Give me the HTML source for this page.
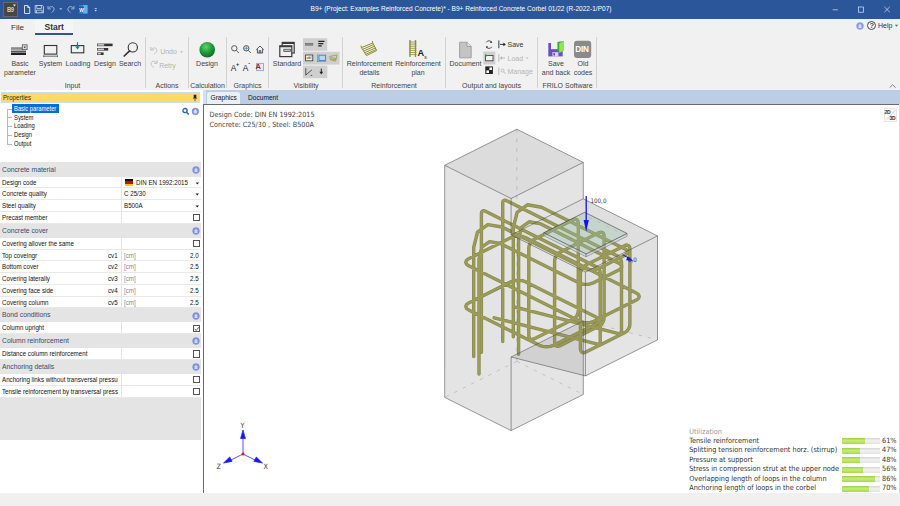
<!DOCTYPE html>
<html><head><meta charset="utf-8"><title>B9+</title>
<style>
*{box-sizing:border-box;margin:0;padding:0}
html,body{width:900px;height:506px;overflow:hidden;background:#f0f0f0;font-family:"Liberation Sans",sans-serif;font-size:7px;color:#222}
.abs{position:absolute}
#title{position:absolute;left:0;top:0;width:900px;height:19px;background:#2b579a;color:#fff}
#title .cap{position:absolute;left:0;width:900px;top:5px;text-align:center;font-size:6.55px;letter-spacing:0px;padding-left:22px}
#menurow{position:absolute;left:0;top:19px;width:900px;height:16px;background:#f1f1f1}
#ribbon{position:absolute;left:0;top:35px;width:900px;height:55px;background:#f1f1f1}
.rl{position:absolute;font-size:7px;color:#444;text-align:center;line-height:9px;white-space:nowrap;transform:translateX(-50%)}
.gl{position:absolute;top:46.8px;font-size:7px;color:#444;white-space:nowrap;transform:translateX(-50%)}
.sep{position:absolute;top:2px;width:1px;height:51px;background:#d2d2d2}
.dis{color:#b4b4b4}
#bluebar{position:absolute;left:0;top:90px;width:900px;height:14px;background:#bccde6}
#left{position:absolute;left:0;top:90px;width:203px;height:403px;background:#fff}
#prophead{position:absolute;left:0.8px;top:1.8px;width:199.2px;height:11px;background:#ffd966;border:1px solid #c9ddf3;font-size:7px;line-height:9px;padding-left:1.6px;color:#3a2a00}#prophead span{display:inline-block;transform:scaleX(.88);transform-origin:0 0}
#tree{position:absolute;left:0;top:13px;width:203px;height:59px;background:#fff;font-size:7px;color:#111}
#tree div.it{position:absolute;left:13.6px;height:9px;line-height:9px;white-space:nowrap;transform:scaleX(.83);transform-origin:0 0}
#grid{position:absolute;left:0;top:72px;width:201px;height:278px;background:#e4e4e4;font-size:7px;color:#111}
.hd{position:absolute;left:0;width:201px;background:#e4e4e4;color:#3b4a6b;padding-left:2px;white-space:nowrap;font-size:6.8px}
.row{position:absolute;left:0;width:201px;background:#fff;border-bottom:1px solid #e8e8e8;white-space:nowrap}
.row .n{position:absolute;left:2px;top:0;transform:scaleX(.885);transform-origin:0 0}.sx{transform:scaleX(.885);transform-origin:0 0}.sxr{transform:scaleX(.885);transform-origin:100% 0}
.row .v{position:absolute;left:121px;top:0;bottom:0;border-left:1px solid #e4e4e4;width:80px}
.cb{position:absolute;left:192px;width:7px;height:7px;border:1px solid #444;background:#fff}
.circ{position:absolute;left:192px;width:7px;height:7px;border-radius:50%;background:#8ea0e0;border:1px solid #6f7fd0}
#split{position:absolute;left:203px;top:90px;width:2px;height:403px;background:#6a6a6a}
#gfx{position:absolute;left:206px;top:104px;width:689px;height:389px;background:#fff}
#status{position:absolute;left:0;top:493px;width:900px;height:13px;background:#f0f0f0}
.gt{font-family:"DejaVu Sans Condensed","DejaVu Sans","Liberation Sans",sans-serif}
</style></head><body>
<div id="title">
<div class="abs" style="left:3px;top:2px;width:15px;height:15px;background:#484644;border:1px solid #6b6967"></div>
<div class="abs" style="left:6.6px;top:5.6px;font-size:7px;font-weight:bold;color:#cfcfcf;letter-spacing:-.5px;transform:scaleX(.85);transform-origin:0 0">B9</div>
<svg class="abs" style="left:0;top:0" width="120" height="19" viewBox="0 0 120 19">
<path d="M13 4.5h3l-1.5 2z" fill="#eee"/>
<path d="M24.5 5.5h3.2l2 2v6h-5.2z M27.7 5.5v2h2" fill="none" stroke="#fff" stroke-width=".8"/>
<path d="M35.2 5.5h7.2l1 1v6.3h-8.2z" fill="none" stroke="#dfe6f2" stroke-width=".8"/><path d="M36.8 5.5v3h4.6v-3M36.5 12.8v-2.6h5.6v2.6" fill="none" stroke="#dfe6f2" stroke-width=".7"/>
<path d="M48.5 8.2c2-2.6 5.5-1.8 5.6.8c0 1.6-1.2 2.6-2.6 3.8" fill="none" stroke="#a9bbdc" stroke-width=".9"/><path d="M48 6v2.9h2.9" fill="none" stroke="#a9bbdc" stroke-width=".9"/>
<path d="M59.3 8.3h3l-1.5 1.7z" fill="#b9c7e2"/>
<path d="M73.5 8.2c-2-2.6-5.5-1.8-5.6.8c0 1.6 1.2 2.6 2.6 3.8" fill="none" stroke="#a9bbdc" stroke-width=".9"/><path d="M74 6v2.9h-2.9" fill="none" stroke="#a9bbdc" stroke-width=".9"/>
<rect x="79" y="5" width="8.5" height="8.5" fill="#2f7fd6"/><rect x="83" y="5" width="4.5" height="8.5" fill="#5fb0f0"/><rect x="78.5" y="6.5" width="5.5" height="5.5" fill="#1a56b0"/>
<rect x="94.6" y="8.3" width="2.2" height=".8" fill="#dfe6f2"/><path d="M94.6 10h2.2l-1.1 1.4z" fill="#dfe6f2"/>
</svg>
<div class="abs" style="left:79.3px;top:6.6px;font-size:5px;font-weight:bold;color:#fff">W</div>
<div class="cap">B9+ (Project: Examples Reinforced Concrete)* - B9+ Reinforced Concrete Corbel 01/22 (R-2022-1/P07)</div>
<svg class="abs" style="left:820px;top:0" width="80" height="19" viewBox="0 0 80 19">
<path d="M12.6 9.8h5.4" stroke="#d6dff0" stroke-width=".7"/>
<rect x="38.4" y="7" width="5.2" height="5.2" fill="none" stroke="#dfe6f4" stroke-width=".7"/>
<path d="M64.4 6.8l5.4 5.4M69.8 6.8l-5.4 5.4" stroke="#dfe6f4" stroke-width=".7"/>
</svg>
</div>
<div id="menurow">
<div class="abs" style="left:11px;top:3.6px;font-size:8px;color:#333">File</div>
<div class="abs" style="left:35px;top:0;width:38px;height:16px;background:#f5f5f5"></div>
<div class="abs" style="left:44.5px;top:2.5px;font-size:8.5px;font-weight:bold;color:#333">Start</div>
<div class="abs" style="left:35px;top:14.3px;width:38px;height:1.6px;background:#2b579a"></div>
<svg class="abs" style="left:855.8px;top:2.6px" width="8" height="8" viewBox="0 0 8 8"><circle cx="4" cy="4" r="3.5" fill="#8e9ae2" stroke="#8a96de" stroke-width=".4"/><path d="M4 1.7l2 2.6h-1.1l.9 1.6h-3.6l.9-1.6h-1.1z" fill="#cfe4fb"/></svg>
<div class="abs" style="left:867.2px;top:2.3px;width:9px;height:9px;border-radius:50%;border:.7px solid #444;background:#fff;font-size:7.4px;font-weight:bold;line-height:7.8px;text-align:center;color:#444">?</div>
<div class="abs" style="left:878px;top:3px;font-size:7px;color:#333">Help</div>
<svg class="abs" style="left:894px;top:4.6px" width="6" height="4"><path d="M.8 .8h3.4l-1.7 1.9z" fill="#666"/></svg>
</div>
<div id="ribbon">
<div class="rl " style="left:20px;top:24.4px">Basic<br>parameter</div>
<div class="rl " style="left:50.5px;top:24.4px">System</div>
<div class="rl " style="left:78px;top:24.4px">Loading</div>
<div class="rl " style="left:105px;top:24.4px">Design</div>
<div class="rl " style="left:130px;top:24.4px">Search</div>
<div class="gl" style="left:72.5px">Input</div>
<div class="sep" style="left:145px"></div>
<div class="rl dis" style="left:168.5px;top:12.2px">Undo</div>
<div class="rl dis" style="left:167.5px;top:25.6px">Retry</div>
<div class="gl" style="left:167px">Actions</div>
<div class="sep" style="left:188px"></div>
<div class="rl " style="left:207px;top:24.4px">Design</div>
<div class="gl" style="left:207.5px">Calculation</div>
<div class="sep" style="left:226px"></div>
<div class="gl" style="left:247.5px">Graphics</div>
<div class="sep" style="left:268px"></div>
<div class="rl " style="left:287px;top:24.4px">Standard</div>
<div class="gl" style="left:306px">Visibility</div>
<div class="sep" style="left:342px"></div>
<div class="rl " style="left:369.5px;top:24.4px">Reinforcement<br>details</div>
<div class="rl " style="left:418px;top:24.4px">Reinforcement<br>plan</div>
<div class="gl" style="left:394px">Reinforcement</div>
<div class="sep" style="left:445px"></div>
<div class="rl " style="left:465.5px;top:24.4px">Document</div>
<div class="gl" style="left:491.5px">Output and layouts</div>
<div class="abs" style="left:507.5px;top:6px;font-size:7px;color:#333">Save</div>
<div class="abs dis" style="left:507.5px;top:19.6px;font-size:7px">Load</div>
<div class="abs dis" style="left:507.5px;top:33px;font-size:7px">Manage</div>
<div class="sep" style="left:537px"></div>
<div class="rl " style="left:556px;top:24.4px">Save<br>and back</div>
<div class="rl " style="left:583px;top:24.4px">Old<br>codes</div>
<div class="gl" style="left:567.5px">FRILO Software</div>
<div class="sep" style="left:596px"></div>
<svg class="abs" style="left:0;top:0" width="900" height="55" viewBox="0 0 900 55">
<!-- Basic parameter -->
<rect x="11" y="12.2" width="11.5" height="2.6" fill="#8a8a8a"/><rect x="11" y="15.6" width="15" height="1.6" fill="#555"/><rect x="11" y="17.6" width="15" height="2.4" fill="#222"/>
<rect x="22.3" y="9.8" width="4.8" height="4.8" fill="#ddd" stroke="#555" stroke-width=".8"/><rect x="23.9" y="11.4" width="1.6" height="1.6" fill="#555"/>
<!-- System -->
<rect x="44.3" y="10.5" width="12.5" height="8.6" fill="none" stroke="#333" stroke-width="1.1"/><path d="M43.5 21.2h14.2" stroke="#333" stroke-width=".7"/><path d="M43.7 20.2v2M57.5 20.2v2" stroke="#333" stroke-width=".6"/>
<!-- Loading -->
<rect x="71.3" y="10.6" width="12.5" height="7.2" fill="none" stroke="#333" stroke-width="1.1"/><path d="M77.5 7.2v5" stroke="#0a8a8a" stroke-width="1.2"/><path d="M75.2 11.6h4.6l-2.3 2.8z" fill="#0a8a8a"/>
<!-- Design bars -->
<rect x="97" y="8.6" width="15.6" height="2.6" fill="#333"/><rect x="97.6" y="9.1" width="6.6" height="1.6" fill="#ccc"/>
<rect x="97" y="13" width="11.2" height="2.6" fill="#333"/><rect x="97.6" y="13.5" width="6.4" height="1.6" fill="#ccc"/>
<rect x="97" y="17.4" width="6.6" height="2.6" fill="#333"/><rect x="97.6" y="17.9" width="3.2" height="1.6" fill="#ccc"/>
<!-- Search -->
<circle cx="132.8" cy="12.4" r="4.6" fill="none" stroke="#333" stroke-width="1.1"/><path d="M129.6 15.8l-5.4 5.2" stroke="#333" stroke-width="1.7" stroke-linecap="round"/>
<!-- Undo / Retry -->
<path d="M151.5 14.5c2-2.6 5.3-1.6 5.3.8c0 1.7-1.4 2.7-2.8 4" fill="none" stroke="#b9b9b9" stroke-width=".9"/><path d="M150.8 12v3h3" fill="none" stroke="#b9b9b9" stroke-width=".9"/>
<path d="M180 16.2h3l-1.5 1.7z" fill="#b9b9b9"/>
<path d="M156.3 27.8c-2-2.6-5.3-1.6-5.3.8c0 1.7 1.4 2.7 2.8 4" fill="none" stroke="#b9b9b9" stroke-width=".9"/><path d="M157 25.3v3h-3" fill="none" stroke="#b9b9b9" stroke-width=".9"/>
<!-- Design green ball -->
<defs><radialGradient id="gb" cx=".42" cy=".32" r=".7"><stop offset="0" stop-color="#5fd36a"/><stop offset=".55" stop-color="#1f9a3c"/><stop offset="1" stop-color="#0f6a28"/></radialGradient></defs>
<circle cx="207.2" cy="14.7" r="7.8" fill="url(#gb)"/>
<!-- Graphics icons -->
<g fill="none" stroke="#333" stroke-width=".8">
<circle cx="234.3" cy="13.3" r="2.7"/><path d="M236.3 15.4l2.6 2.6"/>
<circle cx="246.3" cy="13.3" r="2.7" stroke="#333"/><path d="M248.3 15.4l2.6 2.6"/>
<path d="M256.3 14.6l3.7-3.6l3.7 3.6M257.4 14v4h5.2v-4M259.2 18v-2.4h1.6v2.4"/>
</g>
<path d="M246.3 11v4.6M244 13.3h4.6" stroke="#2a7fd0" stroke-width=".7"/>
<rect x="256.7" y="28.3" width="6.8" height="7.4" fill="#e8eef8" stroke="#6a8fc8" stroke-width=".7"/>
<!-- Standard -->
<g fill="#f1f1f1" stroke="#3a3a3a" stroke-width="1.2"><rect x="282.2" y="7.4" width="12" height="10.6"/><rect x="279.8" y="10.8" width="12" height="10.8"/></g><path d="M282.2 8.2h12M279.8 11.6h12" stroke="#3a3a3a" stroke-width="1.4"/><rect x="283.8" y="14.2" width="6.6" height="2.4" fill="#bbb" stroke="#444" stroke-width=".7"/>
<!-- Visibility toggles -->
<rect x="303" y="3.2" width="24.3" height="12.6" fill="#cfcfcf"/><rect x="303" y="16.8" width="36.6" height="12.8" fill="#cfcfcf"/><rect x="303" y="30.6" width="24.3" height="12.6" fill="#cfcfcf"/>
<rect x="305.3" y="8.2" width="7.6" height="2" fill="#888" stroke="#555" stroke-width=".4"/>
<path d="M318.3 6.4h6.2M318.3 8.6h5M318.3 10.8h3.4" stroke="#222" stroke-width="1.3"/>
<rect x="305.6" y="20" width="7.2" height="5.8" fill="#f4f4f4" stroke="#333" stroke-width=".8"/><text x="306.6" y="24.4" font-family="Liberation Sans,sans-serif" font-size="3.6" fill="#222">abl</text>
<rect x="319" y="20.2" width="6.6" height="5.2" fill="#bcd6f2" stroke="#3a7fd0" stroke-width=".9"/><path d="M317.6 19v8M317 26.4h9" stroke="#3a7fd0" stroke-width=".6"/>
<path d="M329.6 21.5l7.4-1.6l-1.4 6.2l-5-1.2z M331 22.5l5.2 1.2M330.6 24l5 .8" fill="none" stroke="#9a9a40" stroke-width=".8"/>
<path d="M305.8 33.2v7M305.8 40l6-5M310.6 40.4l1.6 0" stroke="#333" stroke-width=".8" fill="none"/>
<path d="M321.3 33.6v4" stroke="#222" stroke-width="1"/><path d="M319.4 36.8h3.8l-1.9 2.8z" fill="#222"/>
<!-- Reinforcement details -->
<g fill="none" stroke="#8e8e2c" stroke-width="1"><path d="M361.4 12.6l11.4-4.6l3.8 7.6l-10.2 5z"/><path d="M362.6 14.4l10.8-4.8M363.8 16l10.8-4.8M365 17.6l10.6-4.8M366 19.2l10.4-4.8M372.8 8l-.6-2M361.4 12.6l-.4-2"/></g>
<!-- Reinforcement plan -->
<g fill="none" stroke="#8e8e2c"><path d="M410 5v17M415.5 5v17" stroke-width="1.3"/><path d="M409 7h7.5M409 9.1h7.5M409 11.2h7.5M409 13.3h7.5M409 15.4h7.5M409 17.5h7.5M409 19.6h7.5" stroke-width=".8"/></g>
<!-- Document -->
<path d="M459.6 7.2h7.4l4.2 4.2v11.4h-11.6z" fill="#c4c4c4" stroke="#8a8a8a" stroke-width=".7"/><path d="M467 7.2v4.2h4.2" fill="#e8e8e8" stroke="#8a8a8a" stroke-width=".7"/>
<!-- small output icons -->
<path d="M486.2 7.4a3.2 3.2 0 0 1 5.6 0M491.8 11.8a3.2 3.2 0 0 1 -5.6 0" fill="none" stroke="#333" stroke-width=".8"/><path d="M491 5.8l1.2 2l-2.2.2zM487 13.4l-1.2-2l2.2-.2z" fill="#333"/>
<rect x="483.3" y="16.6" width="12" height="12.8" fill="#cfcfcf"/>
<rect x="485.6" y="20.4" width="7.4" height="5.4" fill="#f4f4f4" stroke="#333" stroke-width=".8"/><path d="M485.2 19l2.8 1.6l-2.8 1.6z" fill="#1a9a3a"/>
<rect x="485.3" y="31.4" width="7.6" height="7.6" fill="#222"/><rect x="486.4" y="35.4" width="2.6" height="2.6" fill="#fff"/><rect x="489.4" y="32.4" width="2.6" height="2.6" fill="#fff"/>
<path d="M498.8 5.6v7.6" stroke="#333" stroke-width=".9"/><path d="M498.8 5.6v7.6" stroke="#3a7fd0" stroke-width=".9" stroke-dasharray="1.2 1.6"/><path d="M500 9.4h4" stroke="#222" stroke-width=".9"/><path d="M503.4 7.6l2.4 1.8l-2.4 1.8z" fill="#222"/>
<path d="M498.8 19.2v7.6" stroke="#b4b4b4" stroke-width=".9"/><path d="M501 23h4" stroke="#b4b4b4" stroke-width=".9"/><path d="M502 21.2l-2.4 1.8l2.4 1.8z" fill="#b4b4b4"/>
<path d="M498.8 32.6v7.6" stroke="#b4b4b4" stroke-width=".9"/><circle cx="502.6" cy="35.6" r="1.5" fill="none" stroke="#b4b4b4" stroke-width=".8"/><path d="M503.6 36.8l2 2" stroke="#b4b4b4" stroke-width=".9"/>
<path d="M525.6 22.4h3l-1.5 1.7z" fill="#b9b9b9"/>
<!-- Save and back -->
<path d="M548.3 8h14.4v13.4h-14.4z" fill="#6a4fc0"/><rect x="551" y="8" width="8" height="6.2" fill="#f0f0f0"/><rect x="552.4" y="17.2" width="6" height="4.2" fill="#d8d8e8"/><rect x="553.4" y="18" width="1.6" height="2.6" fill="#6a4fc0"/>
<path d="M557.4 7l6.6-1v9.4l-6.6 1.4z" fill="#2fae3a"/><path d="M559.2 8.2l4.8-2.2v9.4l-4.8 2.6z" fill="#9be04a"/>
<!-- DIN -->
<rect x="574" y="5.8" width="17.2" height="17.2" rx="3" fill="#8a8a8a"/>
<!-- collapse chevron -->
<path d="M889.6 52.6l3-2.8l3 2.8" fill="none" stroke="#666" stroke-width=".8"/>
</svg>

<div class="abs" style="left:575.3px;top:9.6px;font-size:8.2px;font-weight:bold;color:#fff;letter-spacing:-.2px">DIN</div>
<div class="abs" style="left:417.5px;top:13px;font-size:9.2px;font-weight:bold;color:#222">A</div><div class="abs" style="left:424.2px;top:18.5px;font-size:5px;color:#222">s</div>
<div class="abs" style="left:230.8px;top:27.8px;font-size:8.4px;color:#222">A</div><div class="abs" style="left:236px;top:25.6px;font-size:5.5px;color:#222;font-weight:bold">+</div><div class="abs" style="left:242.8px;top:27.8px;font-size:8.4px;color:#222">A</div><div class="abs" style="left:248.2px;top:25px;font-size:5.5px;color:#222;font-weight:bold">-</div><div class="abs" style="left:255.6px;top:27.4px;font-size:7.5px;font-weight:bold;color:#c01818">A</div>
</div>
<div id="bluebar">
<div class="abs" style="left:203px;top:0;width:3px;height:14px;background:#d3e0f1"></div>
<div class="abs" style="left:206.5px;top:1.5px;width:33px;height:12.5px;background:#e9f0fa;border-radius:2px 2px 0 0"></div>
<div class="abs" style="left:210.5px;top:4px;font-size:6.6px;color:#111">Graphics</div>
<div class="abs" style="left:248px;top:4px;font-size:6.6px;color:#111">Document</div>
</div>
<div id="left">
<div id="prophead"><span>Properties</span></div>
<svg class="abs" style="left:191px;top:3.6px" width="8" height="9" viewBox="0 0 8 9"><path d="M2.7 .8h2.6v2.8l1 .9h-4.6l1-.9z" fill="#222"/><path d="M4 4.5v2.7" stroke="#222" stroke-width=".7"/></svg>
<div id="tree">
<div class="abs" style="left:12px;top:0.9px;width:47.3px;height:9px;background:#0a6cd6"></div>
<div class="it" style="top:0.6px;color:#fff">Basic parameter</div>
<div class="abs" style="left:7px;top:5.5px;width:5px;height:.6px;background:#b8b8b8"></div>
<div class="it" style="top:9.5px;color:#111">System</div>
<div class="abs" style="left:7px;top:14.4px;width:5px;height:.6px;background:#b8b8b8"></div>
<div class="it" style="top:18.4px;color:#111">Loading</div>
<div class="abs" style="left:7px;top:23.3px;width:5px;height:.6px;background:#b8b8b8"></div>
<div class="it" style="top:27.3px;color:#111">Design</div>
<div class="abs" style="left:7px;top:32.2px;width:5px;height:.6px;background:#b8b8b8"></div>
<div class="it" style="top:36.2px;color:#111">Output</div>
<div class="abs" style="left:7px;top:41.1px;width:5px;height:.6px;background:#b8b8b8"></div>
<div class="abs" style="left:7px;top:5.5px;width:.6px;height:36px;background:#b8b8b8"></div>
<svg class="abs" style="left:181px;top:3.5px" width="20" height="10" viewBox="0 0 20 10"><circle cx="4" cy="3.6" r="2.1" fill="none" stroke="#1f5fbf" stroke-width="1.3"/><path d="M5.6 5.2l2.2 2.3" stroke="#1f5fbf" stroke-width="1.4"/><circle cx="14.4" cy="4.4" r="3.4" fill="#8692e0" stroke="#7a86d8" stroke-width=".5"/><path d="M14.4 2.1l2 2.6h-1.1l.9 1.6h-3.6l.9-1.6h-1.1z" fill="#dfe8fb"/></svg>
</div>
<div id="grid">
<div class="hd" style="top:0.60px;height:14.10px;line-height:14.70px">Concrete material</div>
<svg class="abs" style="left:191.5px;top:3.80px" width="8" height="8" viewBox="0 0 8 8"><circle cx="4" cy="4" r="3.4" fill="#8692e0" stroke="#7a86d8" stroke-width=".5"/><path d="M4 1.7l2 2.6h-1.1l.9 1.6h-3.6l.9-1.6h-1.1z" fill="#bfe0fa"/></svg>
<div class="row" style="top:14.70px;height:11.75px;line-height:11.15px"><span class="n">Design code</span><span class="v"><span class="abs" style="left:2.5px;top:2.6px;width:8.5px;height:6.6px;background:linear-gradient(#111 0 33%,#d00 33% 66%,#fc0 66%)"></span><span class="abs sx" style="left:13.5px;top:0.4px">DIN EN 1992:2015</span><svg class="abs" style="left:72.5px;top:5px" width="5" height="4"><path d="M.6 .6h3.4l-1.7 2z" fill="#222"/></svg></span></div>
<div class="row" style="top:26.45px;height:11.75px;line-height:11.15px"><span class="n">Concrete quality</span><span class="v"><span class="abs sx" style="left:2px;top:0">C 25/30</span><svg class="abs" style="left:72.5px;top:5px" width="5" height="4"><path d="M.6 .6h3.4l-1.7 2z" fill="#222"/></svg></span></div>
<div class="row" style="top:38.20px;height:11.75px;line-height:11.15px"><span class="n">Steel quality</span><span class="v"><span class="abs sx" style="left:2px;top:0">B500A</span><svg class="abs" style="left:72.5px;top:5px" width="5" height="4"><path d="M.6 .6h3.4l-1.7 2z" fill="#222"/></svg></span></div>
<div class="row" style="top:49.95px;height:11.75px;line-height:11.15px"><span class="n">Precast member</span><span class="v"><span class="abs" style="left:71.3px;top:2.2px;width:7.2px;height:7.2px;border:.7px solid #555;background:#fff"></span></span></div>
<div class="hd" style="top:61.70px;height:14.10px;line-height:14.70px">Concrete cover</div>
<svg class="abs" style="left:191.5px;top:64.90px" width="8" height="8" viewBox="0 0 8 8"><circle cx="4" cy="4" r="3.4" fill="#8692e0" stroke="#7a86d8" stroke-width=".5"/><path d="M4 1.7l2 2.6h-1.1l.9 1.6h-3.6l.9-1.6h-1.1z" fill="#bfe0fa"/></svg>
<div class="row" style="top:75.80px;height:11.75px;line-height:11.15px"><span class="n">Covering allover the same</span><span class="v"><span class="abs" style="left:71.3px;top:2.2px;width:7.2px;height:7.2px;border:.7px solid #555;background:#fff"></span></span></div>
<div class="row" style="top:87.55px;height:11.75px;line-height:11.15px"><span class="n">Top coveingr</span><span class="abs sx" style="left:108px;top:0">cv1</span><span class="v"><span class="abs sx" style="left:2px;top:0;color:#888">[cm]</span><span class="abs sxr" style="right:2.5px;top:0">2.0</span></span></div>
<div class="row" style="top:99.30px;height:11.75px;line-height:11.15px"><span class="n">Bottom cover</span><span class="abs sx" style="left:108px;top:0">cv2</span><span class="v"><span class="abs sx" style="left:2px;top:0;color:#888">[cm]</span><span class="abs sxr" style="right:2.5px;top:0">2.5</span></span></div>
<div class="row" style="top:111.05px;height:11.75px;line-height:11.15px"><span class="n">Covering laterally</span><span class="abs sx" style="left:108px;top:0">cv3</span><span class="v"><span class="abs sx" style="left:2px;top:0;color:#888">[cm]</span><span class="abs sxr" style="right:2.5px;top:0">2.5</span></span></div>
<div class="row" style="top:122.80px;height:11.75px;line-height:11.15px"><span class="n">Covering face side</span><span class="abs sx" style="left:108px;top:0">cv4</span><span class="v"><span class="abs sx" style="left:2px;top:0;color:#888">[cm]</span><span class="abs sxr" style="right:2.5px;top:0">2.5</span></span></div>
<div class="row" style="top:134.55px;height:11.75px;line-height:11.15px"><span class="n">Covering column</span><span class="abs sx" style="left:108px;top:0">cv5</span><span class="v"><span class="abs sx" style="left:2px;top:0;color:#888">[cm]</span><span class="abs sxr" style="right:2.5px;top:0">2.5</span></span></div>
<div class="hd" style="top:146.30px;height:14.10px;line-height:14.70px">Bond conditions</div>
<svg class="abs" style="left:191.5px;top:149.50px" width="8" height="8" viewBox="0 0 8 8"><circle cx="4" cy="4" r="3.4" fill="#8692e0" stroke="#7a86d8" stroke-width=".5"/><path d="M4 1.7l2 2.6h-1.1l.9 1.6h-3.6l.9-1.6h-1.1z" fill="#bfe0fa"/></svg>
<div class="row" style="top:160.40px;height:11.75px;line-height:11.15px"><span class="n">Column upright</span><span class="v"><span class="abs" style="left:71.3px;top:2.2px;width:7.2px;height:7.2px;border:.7px solid #555;background:#fff"></span><svg class="abs" style="left:71.3px;top:2.2px" width="8" height="8"><path d="M1.6 3.8l1.6 1.7l2.8-3.4" fill="none" stroke="#333" stroke-width=".8"/></svg></span></div>
<div class="hd" style="top:172.15px;height:14.10px;line-height:14.70px">Column reinforcement</div>
<svg class="abs" style="left:191.5px;top:175.35px" width="8" height="8" viewBox="0 0 8 8"><circle cx="4" cy="4" r="3.4" fill="#8692e0" stroke="#7a86d8" stroke-width=".5"/><path d="M4 1.7l2 2.6h-1.1l.9 1.6h-3.6l.9-1.6h-1.1z" fill="#bfe0fa"/></svg>
<div class="row" style="top:186.25px;height:11.75px;line-height:11.15px"><span class="n">Distance column reinforcement</span><span class="v"><span class="abs" style="left:71.3px;top:2.2px;width:7.2px;height:7.2px;border:.7px solid #555;background:#fff"></span></span></div>
<div class="hd" style="top:198.00px;height:14.10px;line-height:14.70px">Anchoring details</div>
<svg class="abs" style="left:191.5px;top:201.20px" width="8" height="8" viewBox="0 0 8 8"><circle cx="4" cy="4" r="3.4" fill="#8692e0" stroke="#7a86d8" stroke-width=".5"/><path d="M4 1.7l2 2.6h-1.1l.9 1.6h-3.6l.9-1.6h-1.1z" fill="#bfe0fa"/></svg>
<div class="row" style="top:212.10px;height:11.75px;line-height:11.15px"><span class="n">Anchoring links without transversal pressu</span><span class="v"><span class="abs" style="left:71.3px;top:2.2px;width:7.2px;height:7.2px;border:.7px solid #555;background:#fff"></span></span></div>
<div class="row" style="top:223.85px;height:11.75px;line-height:11.15px"><span class="n">Tensile reinforcement by transversal press</span><span class="v"><span class="abs" style="left:71.3px;top:2.2px;width:7.2px;height:7.2px;border:.7px solid #555;background:#fff"></span></span></div>
</div>
</div>
<div id="gfxwrap" class="abs" style="left:203px;top:104px;width:697px;height:389px;background:#fff;border-left:1.3px solid #6a6a6a;border-top:1.3px solid #6a6a6a"></div>
<div class="abs" style="left:899px;top:104px;width:1px;height:389px;background:#d8d8d8"></div>
<div class="abs gt" style="left:209.5px;top:109.8px;font-size:7.2px;color:#444;line-height:10.6px;white-space:nowrap">Design Code: DIN EN 1992:2015<br>Concrete: C25/30 , Steel: B500A</div>
<div class="abs" style="left:883.5px;top:108px;width:13.5px;height:13.5px;border:1px solid #e6e6e6;background:#fafafa"></div>
<svg class="abs" style="left:883.5px;top:108px" width="14" height="14"><path d="M3 11.5l8.5-9.5" stroke="#f6c98a" stroke-width="1"/></svg>
<div class="abs" style="left:884.5px;top:109.3px;font-size:5px;font-weight:bold;color:#333;letter-spacing:-.2px">2D</div>
<div class="abs" style="left:889.5px;top:114.6px;font-size:5px;font-weight:bold;color:#333;letter-spacing:-.2px">3D</div>
<svg class="abs" style="left:0;top:0" width="900" height="506" viewBox="0 0 900 506">
<style>.e{stroke:#4a4a4a;stroke-width:.55}.h{stroke:#b0b0b0;stroke-width:.6;stroke-dasharray:3.5 6}.b0{fill:none;stroke:#84843c;stroke-width:3.4;stroke-linejoin:round;stroke-linecap:round;opacity:.92}.b1{fill:none;stroke:#a0a054;stroke-width:2.0;stroke-linejoin:round;stroke-linecap:round}</style>
<polygon points="516.8,361.3 583.3,394.5 511.1,430.6 444.7,397.4" fill="rgba(120,120,120,0.105)"/>
<polygon points="516.8,129.2 583.3,162.4 583.3,394.5 516.8,361.3" fill="rgba(120,120,120,0.105)"/>
<polygon points="516.8,129.2 444.7,165.3 444.7,397.4 516.8,361.3" fill="rgba(120,120,120,0.105)"/>
<polygon points="583.3,198.8 657.5,235.9 657.5,339.9 583.3,320.9" fill="rgba(120,120,120,0.105)"/>
<polygon points="583.3,320.9 657.5,339.9 585.4,375.9 511.1,357.0" fill="rgba(120,120,120,0.07)"/>
<line class="h" x1="516.8" y1="129.2" x2="516.8" y2="361.3"/>
<line class="h" x1="516.8" y1="361.3" x2="444.7" y2="397.4"/>
<line class="h" x1="516.8" y1="361.3" x2="583.3" y2="394.5"/>
<line class="h" x1="583.3" y1="320.9" x2="657.5" y2="339.9"/>
<path class="b0" d="M473.7,356.6 L473.7,247.5 L477.5,232.1 L487.8,224.6 L502.0,227.0 L585.4,268.7 L589.4,269.9 L594.1,269.9 L598.1,268.7 L625.0,255.3 L627.3,253.3 L627.3,250.9 L625.0,248.9 L541.5,207.2 L527.4,204.8 L517.1,212.3 L513.3,227.7 L513.3,336.8 M479.0,374.0 L479.0,258.8 L481.8,247.2 L489.6,241.6 L500.2,243.4 L579.7,283.2 L583.8,284.4 L588.4,284.4 L592.5,283.2 L619.3,269.8 L621.7,267.8 L621.7,265.4 L619.3,263.4 L539.8,223.6 L529.2,221.8 L521.4,227.4 L518.6,239.0 L518.6,354.2 M481.4,352.2 L481.4,213.6 L481.7,212.1 L482.5,211.1 L483.6,210.7 L485.0,211.1 L596.7,266.9 L598.1,267.9 L599.2,269.4 L600.0,271.2 L600.2,273.0 L600.2,341.4 L600.0,342.7 L599.4,343.7 L598.5,344.2 L597.4,344.2 L494.2,317.8 M502.7,341.6 L502.7,203.0 L502.9,201.5 L503.7,200.5 L504.8,200.1 L506.2,200.4 L617.9,256.3 L619.3,257.3 L620.4,258.8 L621.2,260.6 L621.5,262.4 L621.5,330.7 L621.2,332.1 L620.6,333.1 L619.7,333.6 L618.6,333.6 L515.4,307.2 M511.1,237.5 L514.4,236.4 L518.2,236.0 L522.0,236.4 L525.3,237.5 L636.3,293.0 L638.5,294.6 L639.2,296.6 L638.5,298.5 L636.3,300.1 L593.9,321.3 L590.6,322.4 L586.8,322.8 L583.0,322.4 L579.7,321.3 L468.7,265.8 L466.5,264.2 L465.8,262.3 L466.5,260.3 L468.7,258.7Z M511.1,281.7 L514.4,280.6 L518.2,280.2 L522.0,280.6 L525.3,281.7 L596.0,317.0 L598.2,318.7 L598.9,320.6 L598.2,322.5 L596.0,324.1 L553.6,345.3 L550.3,346.4 L546.5,346.8 L542.7,346.4 L539.4,345.3 L468.7,310.0 L466.5,308.3 L465.8,306.4 L466.5,304.5 L468.7,302.9Z M600.2,344.9 L621.5,334.3 M578.3,223.2 L577.9,221.1 L576.9,219.7 L575.3,219.2 L573.4,219.7 L533.8,239.5 L531.9,240.9 L530.3,243.0 L529.2,245.5 L528.8,248.0 L528.8,335.5 L529.2,337.6 L530.3,339.0 L531.9,339.5 L533.8,339.0 L573.4,319.2 L575.3,317.8 L576.9,315.7 L577.9,313.2 L578.3,310.7Z M604.1,236.1 L603.8,234.0 L602.7,232.6 L601.1,232.1 L599.2,232.6 L559.6,252.4 L557.7,253.8 L556.1,255.9 L555.0,258.4 L554.6,260.9 L554.6,342.3 L555.0,344.4 L556.1,345.9 L557.7,346.4 L559.6,345.9 L599.2,326.1 L601.1,324.7 L602.7,322.6 L603.8,320.1 L604.1,317.5Z M629.9,249.1 L629.6,246.9 L628.5,245.5 L626.9,245.0 L625.0,245.5 L585.4,265.3 L583.5,266.7 L581.9,268.8 L580.8,271.3 L580.4,273.8 L580.4,348.7 L580.8,350.8 L581.9,352.3 L583.5,352.8 L585.4,352.3 L625.0,332.5 L626.9,331.1 L628.5,329.0 L629.6,326.5 L629.9,324.0Z"/><path class="b1" d="M473.7,356.6 L473.7,247.5 L477.5,232.1 L487.8,224.6 L502.0,227.0 L585.4,268.7 L589.4,269.9 L594.1,269.9 L598.1,268.7 L625.0,255.3 L627.3,253.3 L627.3,250.9 L625.0,248.9 L541.5,207.2 L527.4,204.8 L517.1,212.3 L513.3,227.7 L513.3,336.8 M479.0,374.0 L479.0,258.8 L481.8,247.2 L489.6,241.6 L500.2,243.4 L579.7,283.2 L583.8,284.4 L588.4,284.4 L592.5,283.2 L619.3,269.8 L621.7,267.8 L621.7,265.4 L619.3,263.4 L539.8,223.6 L529.2,221.8 L521.4,227.4 L518.6,239.0 L518.6,354.2 M481.4,352.2 L481.4,213.6 L481.7,212.1 L482.5,211.1 L483.6,210.7 L485.0,211.1 L596.7,266.9 L598.1,267.9 L599.2,269.4 L600.0,271.2 L600.2,273.0 L600.2,341.4 L600.0,342.7 L599.4,343.7 L598.5,344.2 L597.4,344.2 L494.2,317.8 M502.7,341.6 L502.7,203.0 L502.9,201.5 L503.7,200.5 L504.8,200.1 L506.2,200.4 L617.9,256.3 L619.3,257.3 L620.4,258.8 L621.2,260.6 L621.5,262.4 L621.5,330.7 L621.2,332.1 L620.6,333.1 L619.7,333.6 L618.6,333.6 L515.4,307.2 M511.1,237.5 L514.4,236.4 L518.2,236.0 L522.0,236.4 L525.3,237.5 L636.3,293.0 L638.5,294.6 L639.2,296.6 L638.5,298.5 L636.3,300.1 L593.9,321.3 L590.6,322.4 L586.8,322.8 L583.0,322.4 L579.7,321.3 L468.7,265.8 L466.5,264.2 L465.8,262.3 L466.5,260.3 L468.7,258.7Z M511.1,281.7 L514.4,280.6 L518.2,280.2 L522.0,280.6 L525.3,281.7 L596.0,317.0 L598.2,318.7 L598.9,320.6 L598.2,322.5 L596.0,324.1 L553.6,345.3 L550.3,346.4 L546.5,346.8 L542.7,346.4 L539.4,345.3 L468.7,310.0 L466.5,308.3 L465.8,306.4 L466.5,304.5 L468.7,302.9Z M600.2,344.9 L621.5,334.3 M578.3,223.2 L577.9,221.1 L576.9,219.7 L575.3,219.2 L573.4,219.7 L533.8,239.5 L531.9,240.9 L530.3,243.0 L529.2,245.5 L528.8,248.0 L528.8,335.5 L529.2,337.6 L530.3,339.0 L531.9,339.5 L533.8,339.0 L573.4,319.2 L575.3,317.8 L576.9,315.7 L577.9,313.2 L578.3,310.7Z M604.1,236.1 L603.8,234.0 L602.7,232.6 L601.1,232.1 L599.2,232.6 L559.6,252.4 L557.7,253.8 L556.1,255.9 L555.0,258.4 L554.6,260.9 L554.6,342.3 L555.0,344.4 L556.1,345.9 L557.7,346.4 L559.6,345.9 L599.2,326.1 L601.1,324.7 L602.7,322.6 L603.8,320.1 L604.1,317.5Z M629.9,249.1 L629.6,246.9 L628.5,245.5 L626.9,245.0 L625.0,245.5 L585.4,265.3 L583.5,266.7 L581.9,268.8 L580.8,271.3 L580.4,273.8 L580.4,348.7 L580.8,350.8 L581.9,352.3 L583.5,352.8 L585.4,352.3 L625.0,332.5 L626.9,331.1 L628.5,329.0 L629.6,326.5 L629.9,324.0Z"/>
<polygon points="444.7,165.3 511.1,198.5 511.1,430.6 444.7,397.4" fill="rgba(120,120,120,0.105)"/>
<polygon points="583.3,162.4 511.1,198.5 511.1,234.9 583.3,198.8" fill="rgba(120,120,120,0.105)"/>
<polygon points="583.3,320.9 511.1,357.0 511.1,430.6 583.3,394.5" fill="rgba(120,120,120,0.105)"/>
<polygon points="516.8,129.2 583.3,162.4 511.1,198.5 444.7,165.3" fill="rgba(120,120,120,0.17)"/>
<polygon points="583.3,198.8 657.5,235.9 585.4,272.0 511.1,234.9" fill="rgba(120,120,120,0.15)"/>
<polygon points="511.1,234.9 585.4,272.0 585.4,375.9 511.1,357.0" fill="rgba(120,120,120,0.105)"/>
<polygon points="657.5,235.9 585.4,272.0 585.4,375.9 657.5,339.9" fill="rgba(120,120,120,0.13)"/>
<line class="e" x1="516.8" y1="129.2" x2="583.3" y2="162.4"/>
<line class="e" x1="583.3" y1="162.4" x2="511.1" y2="198.5"/>
<line class="e" x1="511.1" y1="198.5" x2="444.7" y2="165.3"/>
<line class="e" x1="444.7" y1="165.3" x2="516.8" y2="129.2"/>
<line class="e" x1="444.7" y1="165.3" x2="444.7" y2="397.4"/>
<line class="e" x1="511.1" y1="198.5" x2="511.1" y2="234.9"/>
<line class="e" x1="511.1" y1="357.0" x2="511.1" y2="430.6"/>
<line class="e" x1="583.3" y1="162.4" x2="583.3" y2="198.8"/>
<line class="e" x1="583.3" y1="320.9" x2="583.3" y2="394.5"/>
<line class="e" x1="444.7" y1="397.4" x2="511.1" y2="430.6"/>
<line class="e" x1="511.1" y1="430.6" x2="583.3" y2="394.5"/>
<line class="e" x1="583.3" y1="198.8" x2="657.5" y2="235.9"/>
<line class="e" x1="657.5" y1="235.9" x2="585.4" y2="272.0"/>
<line class="e" x1="585.4" y1="272.0" x2="511.1" y2="234.9"/>
<line class="e" x1="511.1" y1="234.9" x2="583.3" y2="198.8"/>
<line class="e" x1="657.5" y1="235.9" x2="657.5" y2="339.9"/>
<line class="e" x1="585.4" y1="272.0" x2="585.4" y2="375.9"/>
<line class="e" x1="657.5" y1="339.9" x2="585.4" y2="375.9"/>
<line class="e" x1="585.4" y1="375.9" x2="511.1" y2="357.0"/>
<line class="e" x1="511.1" y1="357.0" x2="583.3" y2="320.9"/><polygon points="584.7,212.3 627.1,233.5 586.1,254.0 543.7,232.8" fill="rgba(150,190,172,.33)" stroke="#2e2e2e" stroke-width=".55"/><polygon points="543.7,232.8 586.1,254.0 586.1,256.8 543.7,235.6" fill="rgba(185,210,200,.55)" stroke="#555" stroke-width=".4"/><polygon points="627.1,233.5 586.1,254.0 586.1,256.8 627.1,236.3" fill="rgba(185,210,200,.55)" stroke="#555" stroke-width=".4"/><line class="h" x1="588.9" y1="217.2" x2="624.3" y2="234.9"/>
<path d="M586.2 196v26" stroke="#1414e6" stroke-width="1.3"/><path d="M583.6 220h5.2l-2.6 11.8z" fill="#1414e6"/>
<text x="590.5" y="203.3" font-family="DejaVu Sans Condensed,DejaVu Sans,Liberation Sans,sans-serif" font-size="6.2" fill="#333">100,0</text>
<text x="628" y="262" font-family="DejaVu Sans Condensed,DejaVu Sans,Liberation Sans,sans-serif" font-size="6.2" fill="#333">0,0</text>
<path d="M622.7 254.7l7 4" stroke="#1414e6" stroke-width="1"/><path d="M627.6 256.3l5.8 4.6l-7.2-.6z" fill="#1414e6"/>
<g stroke="#2a2aff" stroke-width=".8" fill="#1414ff"><path d="M243 454V436M243 454l-16 8M243 454l16 8" fill="none"/><path d="M243 430l2.4 8.5h-4.8z"/><path d="M223.5 463l6.2-6l2.4 4.4z"/><path d="M262.5 463l-6.2-6l-2.4 4.4z"/></g><circle cx="243" cy="454" r="1.4" fill="#f00"/>
<g font-family="DejaVu Sans Condensed,DejaVu Sans,Liberation Sans,sans-serif" font-size="7.2" fill="#333"><text x="240.6" y="428">Y</text><text x="216.4" y="468.6">Z</text><text x="263.4" y="468.6">X</text></g>
</svg>
<div class="abs gt" style="left:689.2px;top:427px;font-size:7.25px;color:#999">Utilization</div>
<div class="abs gt" style="left:689.2px;top:436.70px;font-size:7.25px;color:#333;white-space:nowrap;line-height:8px">Tensile reinforcement</div>
<div class="abs" style="left:842px;top:438.10px;width:38px;height:6.2px;background:linear-gradient(#d4d4d4,#f2f2f2 45%,#e2e2e2)"></div>
<div class="abs" style="left:842px;top:438.10px;width:23.2px;height:6.2px;background:linear-gradient(#9ed23c,#c6ec7a 45%,#a8da48)"></div>
<div class="abs gt" style="left:870px;width:26.5px;text-align:right;top:436.70px;font-size:7.25px;color:#333;line-height:8px">61%</div>
<div class="abs gt" style="left:689.2px;top:446.25px;font-size:7.25px;color:#333;white-space:nowrap;line-height:8px">Splitting tension reinforcement horz. (stirrup)</div>
<div class="abs" style="left:842px;top:447.65px;width:38px;height:6.2px;background:linear-gradient(#d4d4d4,#f2f2f2 45%,#e2e2e2)"></div>
<div class="abs" style="left:842px;top:447.65px;width:17.9px;height:6.2px;background:linear-gradient(#9ed23c,#c6ec7a 45%,#a8da48)"></div>
<div class="abs gt" style="left:870px;width:26.5px;text-align:right;top:446.25px;font-size:7.25px;color:#333;line-height:8px">47%</div>
<div class="abs gt" style="left:689.2px;top:455.80px;font-size:7.25px;color:#333;white-space:nowrap;line-height:8px">Pressure at support</div>
<div class="abs" style="left:842px;top:457.20px;width:38px;height:6.2px;background:linear-gradient(#d4d4d4,#f2f2f2 45%,#e2e2e2)"></div>
<div class="abs" style="left:842px;top:457.20px;width:18.2px;height:6.2px;background:linear-gradient(#9ed23c,#c6ec7a 45%,#a8da48)"></div>
<div class="abs gt" style="left:870px;width:26.5px;text-align:right;top:455.80px;font-size:7.25px;color:#333;line-height:8px">48%</div>
<div class="abs gt" style="left:689.2px;top:465.35px;font-size:7.25px;color:#333;white-space:nowrap;line-height:8px">Stress in compression strut at the upper node</div>
<div class="abs" style="left:842px;top:466.75px;width:38px;height:6.2px;background:linear-gradient(#d4d4d4,#f2f2f2 45%,#e2e2e2)"></div>
<div class="abs" style="left:842px;top:466.75px;width:21.3px;height:6.2px;background:linear-gradient(#9ed23c,#c6ec7a 45%,#a8da48)"></div>
<div class="abs gt" style="left:870px;width:26.5px;text-align:right;top:465.35px;font-size:7.25px;color:#333;line-height:8px">56%</div>
<div class="abs gt" style="left:689.2px;top:474.90px;font-size:7.25px;color:#333;white-space:nowrap;line-height:8px">Overlapping length of loops in the column</div>
<div class="abs" style="left:842px;top:476.30px;width:38px;height:6.2px;background:linear-gradient(#d4d4d4,#f2f2f2 45%,#e2e2e2)"></div>
<div class="abs" style="left:842px;top:476.30px;width:32.7px;height:6.2px;background:linear-gradient(#9ed23c,#c6ec7a 45%,#a8da48)"></div>
<div class="abs gt" style="left:870px;width:26.5px;text-align:right;top:474.90px;font-size:7.25px;color:#333;line-height:8px">86%</div>
<div class="abs gt" style="left:689.2px;top:484.45px;font-size:7.25px;color:#333;white-space:nowrap;line-height:8px">Anchoring length of loops in the corbel</div>
<div class="abs" style="left:842px;top:485.85px;width:38px;height:6.2px;background:linear-gradient(#d4d4d4,#f2f2f2 45%,#e2e2e2)"></div>
<div class="abs" style="left:842px;top:485.85px;width:26.6px;height:6.2px;background:linear-gradient(#9ed23c,#c6ec7a 45%,#a8da48)"></div>
<div class="abs gt" style="left:870px;width:26.5px;text-align:right;top:484.45px;font-size:7.25px;color:#333;line-height:8px">70%</div>
<div id="status"></div>
</body></html>
